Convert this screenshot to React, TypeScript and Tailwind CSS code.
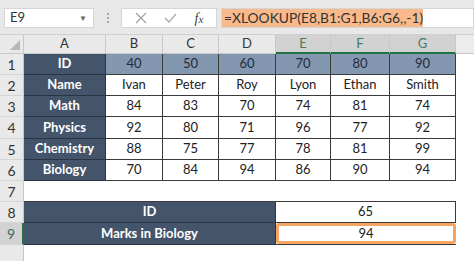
import React from 'react';

const colWClass = ['w-[82px]', 'w-[57px]', 'w-[56px]', 'w-[57px]', 'w-[55px]', 'w-[59px]', 'w-[66px]'];
const letters = ['A', 'B', 'C', 'D', 'E', 'F', 'G'];

const rows: { label: string; values: string[]; h: string }[] = [
  { label: 'ID', values: ['40', '50', '60', '70', '80', '90'], h: 'h-[21px]' },
  { label: 'Name', values: ['Ivan', 'Peter', 'Roy', 'Lyon', 'Ethan', 'Smith'], h: 'h-[21px]' },
  { label: 'Math', values: ['84', '83', '70', '74', '81', '74'], h: 'h-[21px]' },
  { label: 'Physics', values: ['92', '80', '71', '96', '77', '92'], h: 'h-[22px]' },
  { label: 'Chemistry', values: ['88', '75', '77', '78', '81', '99'], h: 'h-[21px]' },
  { label: 'Biology', values: ['70', '84', '94', '86', '90', '94'], h: 'h-[21px]' },
];

function RowNum({ n, active }: { n?: number; active?: boolean }) {
  return (
    <div
      className={
        'w-[24px] shrink-0 flex items-center justify-center text-[14px] border-b border-[#d4d4d4] ' +
        (active
          ? 'bg-[#d2d2d2] text-[#3f6b52] border-r-2 border-r-[#217346]'
          : 'bg-[#e9e9e9] text-[#333] border-r border-r-[#c8c8c8]')
      }
    >
      {n}
    </div>
  );
}

export default function App() {
  return (
    <div className="w-[474px] h-[261px] overflow-hidden bg-white font-['Lato',sans-serif] text-[13px] text-[#222]">
      {/* formula bar */}
      <div className="h-[35px] bg-[#e8e8e8] border-b border-[#d0d0d0] flex items-start pt-[8px] pl-[4px]">
        <div className="w-[90px] h-[20px] bg-white border border-[#d6d6d6] flex items-center justify-between pl-[5px] pr-[6px] text-[13px] text-[#333]">
          <span>E9</span>
          <span className="text-[8px] text-[#666]">▼</span>
        </div>
        <div className="w-[27px] h-[20px] flex flex-col items-center justify-center gap-[2px]">
          <span className="w-[2px] h-[2px] bg-[#a8a8a8]" />
          <span className="w-[2px] h-[2px] bg-[#a8a8a8]" />
          <span className="w-[2px] h-[2px] bg-[#a8a8a8]" />
        </div>
        <div className="w-[96px] h-[20px] bg-white border border-[#d6d6d6] flex items-center justify-around px-[4px]">
          <svg width="12" height="12" viewBox="0 0 12 12">
            <path d="M1 1 L11 11 M11 1 L1 11" stroke="#a0a0a0" strokeWidth="1.2" />
          </svg>
          <svg width="13" height="12" viewBox="0 0 13 12">
            <path d="M1 6 L5 10 L12 2" stroke="#a8a8a8" strokeWidth="1.3" fill="none" />
          </svg>
          <span className="font-['Liberation_Serif',serif] italic text-[14px] text-[#444]">
            f<span className="text-[11px]">x</span>
          </span>
        </div>
        <div className="ml-[4px] flex-1 h-[20px] bg-white border border-[#d6d6d6] flex items-center">
          <div className="h-[18px] w-[201px] bg-[#f8ba8d] flex items-center pl-[2px] text-[13.8px] text-[#333] whitespace-nowrap overflow-hidden">
            =XLOOKUP(E8,B1:G1,B6:G6,,-1)
          </div>
        </div>
      </div>

      {/* column headers */}
      <div className="flex h-[19px]">
        <div className="w-[24px] shrink-0 bg-[#e9e9e9] border-r border-b border-[#c8c8c8] relative">
          <svg className="absolute right-[3px] bottom-[3px]" width="10" height="10" viewBox="0 0 10 10">
            <path d="M10 0 L10 10 L0 10 Z" fill="#b8b8b8" />
          </svg>
        </div>
        {letters.map((l, i) => {
          const sel = i >= 4;
          return (
            <div
              key={l}
              className={
                colWClass[i] +
                ' shrink-0 flex items-center justify-center text-[13px] border-r border-[#c8c8c8] ' +
                (sel
                  ? 'bg-[#d2d2d2] text-[#4a7a60] border-b-2 border-b-[#217346]'
                  : 'bg-[#e9e9e9] text-[#333] border-b border-b-[#c8c8c8]')
              }
            >
              {l}
            </div>
          );
        })}
        <div className="flex-1 bg-[#ececec] border-b border-[#c8c8c8]" />
      </div>

      {/* table rows */}
      {rows.map((r, ri) => (
        <div key={r.label} className={'flex ' + r.h}>
          <RowNum n={ri + 1} />
          <div
            className={
              colWClass[0] +
              ' shrink-0 bg-[#44546a] text-white font-bold flex items-center justify-center border-r border-b border-[#2a3442]'
            }
          >
            {r.label}
          </div>
          {r.values.map((v, vi) => (
            <div
              key={vi}
              className={
                colWClass[vi + 1] +
                ' shrink-0 flex items-center justify-center border-r border-b border-[#3a3a3a] ' +
                (ri === 0 ? 'bg-[#8497b0] text-[#1f2b3c]' : 'bg-white text-[#222]')
              }
            >
              {v}
            </div>
          ))}
          <div className="flex-1" />
        </div>
      ))}

      {/* row 7 */}
      <div className="flex h-[21px]">
        <RowNum n={7} />
        <div className="w-[432px] shrink-0 border-b border-[#3a3a3a]" />
      </div>

      {/* row 8 */}
      <div className="flex h-[21px]">
        <RowNum n={8} />
        <div className="w-[252px] shrink-0 bg-[#44546a] text-white font-bold flex items-center justify-center border-r border-b border-[#2a3442]">
          ID
        </div>
        <div className="w-[180px] shrink-0 flex items-center justify-center border-r border-b border-[#3a3a3a]">
          65
        </div>
      </div>

      {/* row 9 */}
      <div className="flex h-[22px]">
        <RowNum n={9} active />
        <div className="w-[252px] shrink-0 bg-[#44546a] text-white font-bold flex items-center justify-center border-r border-b border-[#2a3442]">
          Marks in Biology
        </div>
        <div className="w-[180px] shrink-0 border-b border-[#3a3a3a]">
          <div className="h-full border-[3px] border-[#f5a462] rounded-[3px] flex items-center justify-center">
            94
          </div>
        </div>
      </div>

      {/* row 10, cut off by the window */}
      <div className="flex h-[30px]">
        <RowNum />
      </div>
    </div>
  );
}
